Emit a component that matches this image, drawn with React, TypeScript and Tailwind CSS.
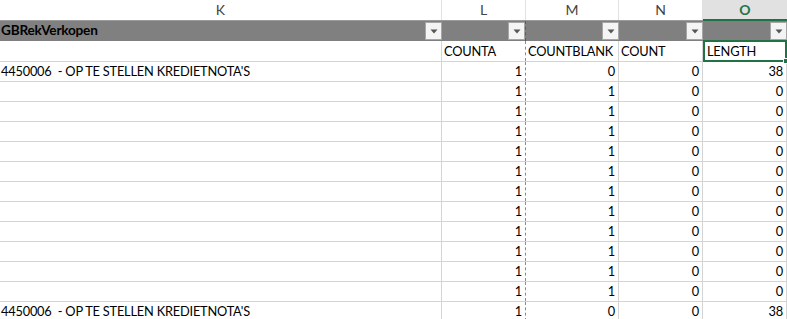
import React from 'react';

// Excel-like sheet fragment: columns K..O with an autofilter header
const cols = [
  { key: 'K', w: 'w-[442px]' },
  { key: 'L', w: 'w-[84px]' },
  { key: 'M', w: 'w-[93px]' },
  { key: 'N', w: 'w-[84px]' },
  { key: 'O', w: 'w-[84px]' },
];

const LABEL = "4450006  - OP TE STELLEN KREDIETNOTA'S";

const rows: (string | number)[][] = [
  [LABEL, 1, 0, 0, 38],
  ...Array.from({ length: 11 }, () => ['', 1, 1, 0, 0]),
  [LABEL, 1, 0, 0, 38],
];

const FilterButton = () => (
  <div className="w-[17px] h-[18px] shrink-0 bg-[#f4f4f4] border border-[#a6a6a6] flex items-center justify-center">
    <svg width="8" height="5" viewBox="0 0 8 5">
      <path d="M0.5 0.5 L7.5 0.5 L4 4.5 Z" fill="#555" />
    </svg>
  </div>
);

const borderFor = (i: number) =>
  i === 1 ? 'border-r border-dashed border-r-[#8a8a8a]' : 'border-r border-r-[#d4d4d4]';

export default function App() {
  return (
    <div className="w-[787px] h-[319px] overflow-hidden bg-white font-['Lato','Liberation_Sans',sans-serif] text-[12.8px] text-black leading-none">
      {/* column letters */}
      <div className="flex h-[21px] border-b border-b-[#9b9b9b]">
        {cols.map((c) => (
          <div
            key={c.key}
            className={
              c.key === 'O'
                ? `${c.w} shrink-0 flex items-center justify-center bg-[#e1e1e1] border-b-2 border-b-[#217346] -mb-px text-[#217346] font-bold text-[14px]`
                : `${c.w} shrink-0 flex items-center justify-center border-r border-r-[#e1e1e1] text-[#444] text-[14px]`
            }
          >
            {c.key}
          </div>
        ))}
        <div className="flex-1" />
      </div>

      {/* autofilter header row */}
      <div className="flex h-[20px] bg-[#808080]">
        {cols.map((c, i) => (
          <div key={c.key} className={`${c.w} shrink-0 flex items-center justify-between pl-px ${i === 1 ? 'border-r border-dashed border-r-[#5a5a5a]' : ''}`}>
            <span className="font-bold text-[13.6px] tracking-[-0.2px]">{i === 0 ? 'GBRekVerkopen' : ''}</span>
            <FilterButton />
          </div>
        ))}
        <div className="flex-1" />
      </div>

      {/* function names row */}
      <div className="flex h-[21px] border-b border-b-[#d4d4d4] tracking-[-0.2px]">
        {['', 'COUNTA', 'COUNTBLANK', 'COUNT', 'LENGTH'].map((t, i) => (
          <div
            key={i}
            className={
              i === 4
                ? `${cols[i].w} shrink-0 relative flex items-end pl-[2px] pb-[2px] border-2 border-[#217346] -mb-px -mt-px`
                : `${cols[i].w} shrink-0 flex items-end pl-[2px] pb-[3px] overflow-hidden ${borderFor(i)}`
            }
          >
            {t}
            {i === 4 && (
              <div className="absolute -right-[4px] -bottom-[4px] w-[6px] h-[6px] bg-[#217346] border border-white" />
            )}
          </div>
        ))}
        <div className="flex-1" />
      </div>

      {/* data rows */}
      {rows.map((r, ri) => (
        <div key={ri} className="flex h-[20px] border-b border-b-[#d4d4d4] tracking-[-0.2px]">
          {r.map((v, i) => (
            <div
              key={i}
              className={`${cols[i].w} shrink-0 flex items-end pb-[3px] ${
                i === 0 ? 'pl-px justify-start' : 'pr-[3px] justify-end'
              } ${borderFor(i)} whitespace-pre`}
            >
              {v}
            </div>
          ))}
          <div className="flex-1" />
        </div>
      ))}
    </div>
  );
}
